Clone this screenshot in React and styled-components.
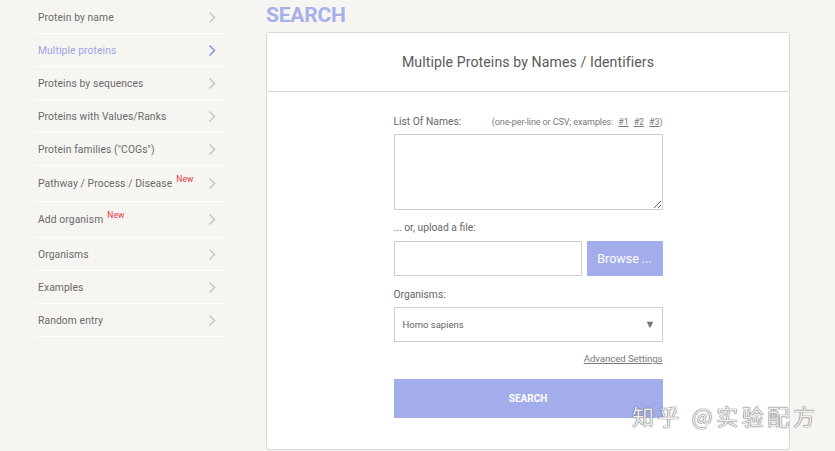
import styled, { createGlobalStyle } from "styled-components";

const GlobalStyle = createGlobalStyle`
    html, body {
        margin: 0;
        padding: 0;
        background-color: #f6f5f2;
        font-family: Roboto, "Liberation Sans", sans-serif;
    }
`;

const Page = styled.div`
    display: flex;
    align-items: flex-start;
    gap: 40px;
    width: 835px;
    height: 451px;
    padding-left: 34px;
    box-sizing: border-box;
    overflow: hidden;
    position: relative;
`;

const Sidebar = styled.ul`
    list-style: none;
    margin: 0;
    padding: 1px 0 0;
    width: 192px;
    flex-shrink: 0;
`;

const MenuItem = styled.li`
    display: flex;
    align-items: center;
    justify-content: space-between;
    height: ${(props) => (props.$tall ? "35px" : "32px")};
    padding: 0 10px 0 4px;
    border-bottom: 1px solid #fdfdfc;
    font-size: 10.3px;
    color: ${(props) => (props.$active ? "#9ba5e3" : "#6a6a6a")};
    letter-spacing: 0.1px;

    svg {
        flex-shrink: 0;
        stroke: ${(props) => (props.$active ? "#8a95dc" : "#c8c8c8")};
    }
`;

const NewTag = styled.span`
    color: #e0383d;
    font-size: 8.5px;
    line-height: 0;
    margin-left: 4px;
    position: relative;
    top: -5px;
`;

const Main = styled.div`
    display: flex;
    flex-direction: column;
    width: 524px;
`;

const Heading = styled.h1`
    margin: 0;
    height: 32px;
    line-height: 30px;
    font-size: 21px;
    font-weight: 700;
    color: #a6b0e9;
    letter-spacing: -0.2px;
`;

const Panel = styled.div`
    background-color: #fff;
    border: 1px solid #d9d9d9;
    border-radius: 3px;
    height: 418px;
    box-sizing: border-box;
`;

const PanelHeader = styled.div`
    display: flex;
    align-items: center;
    justify-content: center;
    height: 58px;
    border-bottom: 1px solid #d9d9d9;
    font-size: 14.1px;
    color: #5a5a5a;
    letter-spacing: 0.1px;
`;

const Form = styled.div`
    display: flex;
    flex-direction: column;
    width: 269px;
    margin: 0 auto;
    padding-top: 23px;
`;

const LabelRow = styled.div`
    display: flex;
    justify-content: space-between;
    align-items: baseline;
    height: 14px;
    margin-top: ${(props) => props.$top || 0}px;
`;

const Label = styled.label`
    font-size: 10.3px;
    color: #666;
    line-height: 14px;
`;

const Hint = styled.span`
    font-size: 9px;
    color: #7a7a7a;
    letter-spacing: -0.1px;

    a {
        color: #7a7a7a;
        margin-left: 5px;
    }
`;

const TextArea = styled.textarea`
    margin-top: 5px;
    height: 76px;
    box-sizing: border-box;
    border: 1px solid #cfcfcf;
    resize: vertical;
    font-family: inherit;
`;

const FileRow = styled.div`
    display: flex;
    gap: 5px;
    height: 35px;
    margin-top: 6px;
`;

const FileInput = styled.input`
    flex: 1;
    box-sizing: border-box;
    border: 1px solid #cfcfcf;
    margin: 0;
`;

const BrowseButton = styled.button`
    width: 76px;
    border: none;
    background-color: #a3adeb;
    color: #fff;
    font-family: inherit;
    font-size: 12.5px;
    padding: 0;
`;

const Select = styled.div`
    display: flex;
    align-items: center;
    justify-content: space-between;
    margin-top: 5px;
    height: 35px;
    box-sizing: border-box;
    border: 1px solid #cfcfcf;
    padding: 0 6px 0 8px;
    font-size: 9.5px;
    color: #666;

    span.arrow {
        font-size: 11px;
        color: #777;
    }
`;

const AdvancedLink = styled.a`
    align-self: flex-end;
    margin-top: 10px;
    height: 14px;
    line-height: 14px;
    font-size: 9.7px;
    color: #7a7a7a;
    text-decoration: underline;
    letter-spacing: -0.1px;
`;

const SearchButton = styled.button`
    margin-top: 13px;
    height: 39px;
    border: none;
    background-color: #a3adeb;
    color: #fff;
    font-family: inherit;
    font-size: 10px;
    font-weight: 700;
`;

const Watermark = styled.div`
    position: absolute;
    left: 632px;
    top: 399px;
    font-family: "Noto Sans CJK SC", sans-serif;
    font-size: 22px;
    color: rgba(255, 255, 255, 0.92);
    text-shadow: 0 0 1px #555, 0 0 1px #555;
    letter-spacing: 3.6px;
`;

const Chevron = () => (
    <svg width="8" height="13" viewBox="0 0 8 13" fill="none" strokeWidth="1.6">
        <path d="M1.5 1.5 L6.5 6.5 L1.5 11.5" />
    </svg>
);

const menu = [
    { label: "Protein by name" },
    { label: "Multiple proteins", active: true },
    { label: "Proteins by sequences" },
    { label: "Proteins with Values/Ranks" },
    { label: "Protein families (\"COGs\")" },
    { label: "Pathway / Process / Disease", isNew: true },
    { label: "Add organism", isNew: true },
    { label: "Organisms" },
    { label: "Examples" },
    { label: "Random entry" },
];

const App = () => {
    return (
        <Page>
            <GlobalStyle />
            <Sidebar>
                {menu.map((m, idx) => (
                    <MenuItem key={'menu-idx' + idx} $active={m.active} $tall={m.isNew}>
                        <span>
                            {m.label}
                            {m.isNew && <NewTag>New</NewTag>}
                        </span>
                        <Chevron />
                    </MenuItem>
                ))}
            </Sidebar>
            <Main>
                <Heading>SEARCH</Heading>
                <Panel>
                    <PanelHeader>Multiple Proteins by Names / Identifiers</PanelHeader>
                    <Form>
                        <LabelRow>
                            <Label>List Of Names:</Label>
                            <Hint>
                                (one-per-line or CSV; examples:
                                <a href="#">#1</a>
                                <a href="#">#2</a>
                                <a href="#">#3</a>)
                            </Hint>
                        </LabelRow>
                        <TextArea />
                        <LabelRow $top={11}>
                            <Label>... or, upload a file:</Label>
                        </LabelRow>
                        <FileRow>
                            <FileInput type="text" />
                            <BrowseButton>Browse ...</BrowseButton>
                        </FileRow>
                        <LabelRow $top={12}>
                            <Label>Organisms:</Label>
                        </LabelRow>
                        <Select>
                            <span>Homo sapiens</span>
                            <span className="arrow">▼</span>
                        </Select>
                        <AdvancedLink href="#">Advanced Settings</AdvancedLink>
                        <SearchButton>SEARCH</SearchButton>
                    </Form>
                </Panel>
            </Main>
            <Watermark>知乎 @实验配方</Watermark>
        </Page>
    )
}

export default App;
